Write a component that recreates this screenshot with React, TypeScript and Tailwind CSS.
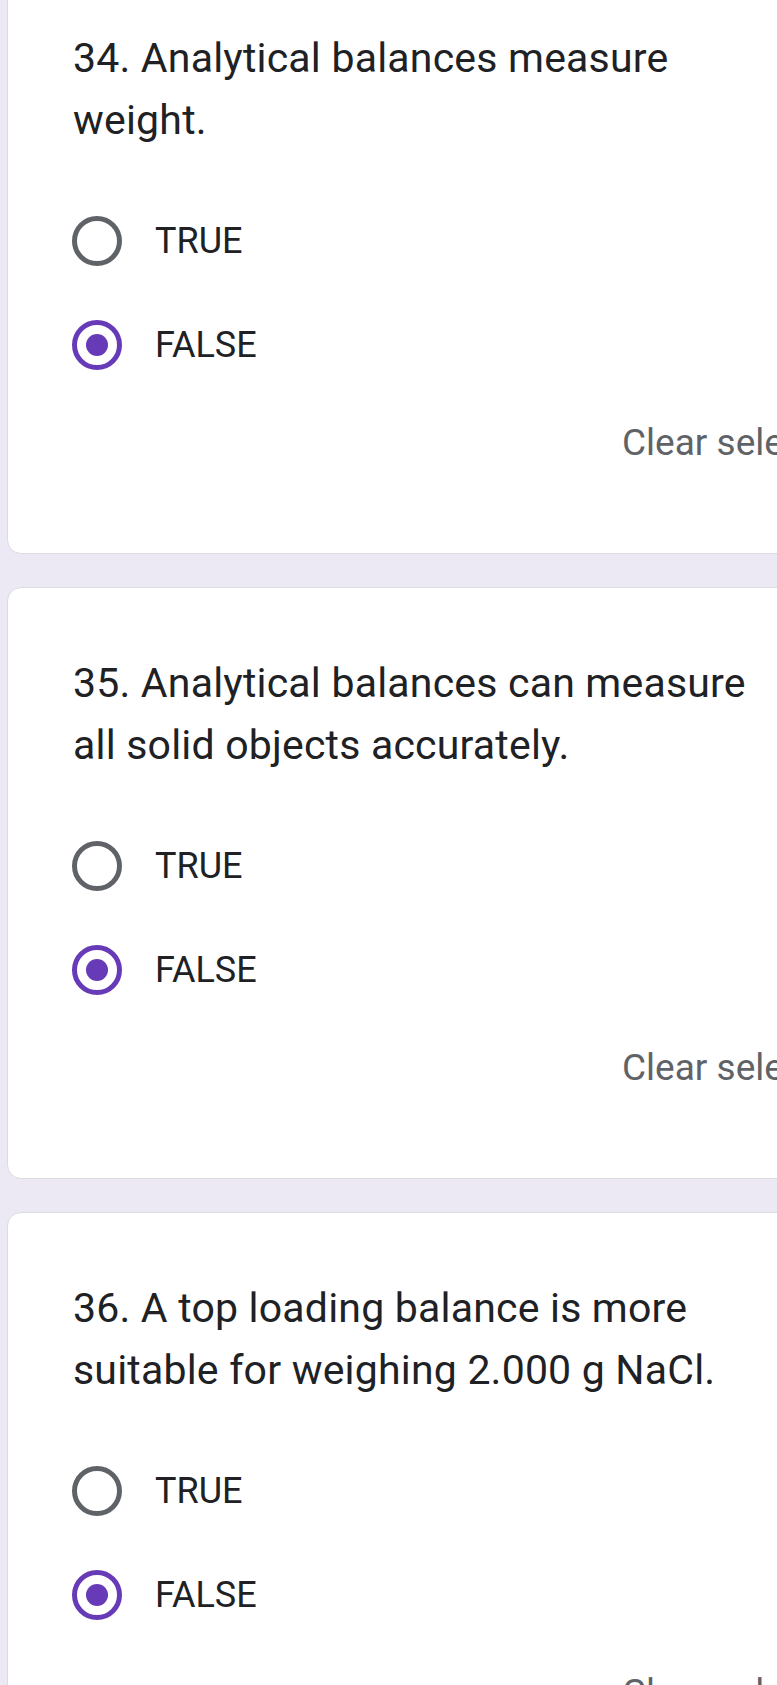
import { useState } from 'react';

// Preguntas del formulario
const QUESTIONS = [
  { id: 34, text: '34. Analytical balances measure weight.' },
  { id: 35, text: '35. Analytical balances can measure all solid objects accurately.' },
  { id: 36, text: '36. A top loading balance is more suitable for weighing 2.000 g NaCl.' },
];

const OPTIONS = ['TRUE', 'FALSE'];

const Radio = ({ checked }: { checked: boolean }) => (
  <span
    className={`flex items-center justify-center w-[50px] h-[50px] rounded-full border-[5px] shrink-0 ${
      checked ? 'border-[#673ab7]' : 'border-[#5f6368]'
    }`}
  >
    {checked && <span className="w-[22px] h-[22px] rounded-full bg-[#673ab7]" />}
  </span>
);

const QuestionCard = ({ text, first }: { text: string; first?: boolean }) => {
  const [value, setValue] = useState('FALSE');

  return (
    <div
      className={`ml-[7px] w-[900px] bg-white rounded-[14px] border border-[#dadce0] pt-[64px] pb-[86px] ${
        first ? '-mt-[38px]' : ''
      }`}
    >
      {/* Pregunta */}
      <p className="ml-[65px] w-[700px] text-[41px] leading-[62px] tracking-[0.2px] text-[#202124] font-['Roboto',sans-serif]">
        {text}
      </p>

      {/* Opciones */}
      <div className="mt-[65px] flex flex-col gap-[54px] pl-[64px]">
        {OPTIONS.map((opt) => (
          <label key={opt} className="flex items-center gap-[33px] h-[50px] cursor-pointer" onClick={() => setValue(opt)}>
            <Radio checked={value === opt} />
            <span className="text-[36px] text-[#202124] font-['Roboto',sans-serif]">{opt}</span>
          </label>
        ))}
      </div>

      {/* Limpiar selección */}
      <div className="mt-[49px] h-[48px] flex items-center pl-[614px]">
        <span className="whitespace-nowrap text-[37px] text-[#5f6368] font-['Roboto',sans-serif]">
          Clear selection
        </span>
      </div>
    </div>
  );
};

export default function App() {
  return (
    <div className="w-[777px] h-[1685px] overflow-hidden bg-[#ece8f4] flex flex-col gap-[33px]">
      {QUESTIONS.map((q, i) => (
        <QuestionCard key={q.id} text={q.text} first={i === 0} />
      ))}
    </div>
  );
}
